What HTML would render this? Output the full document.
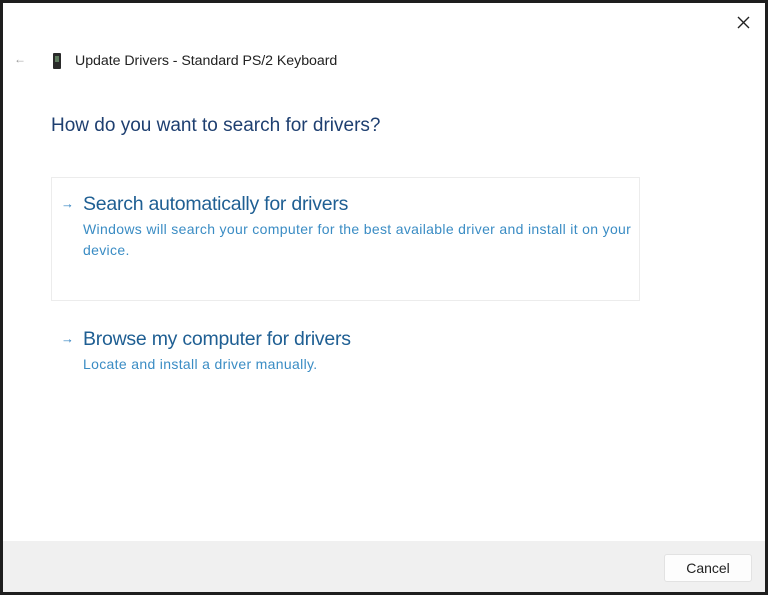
<!DOCTYPE html>
<html><head><style>
html,body{margin:0;padding:0;width:768px;height:595px;overflow:hidden;background:#fff;font-family:"Liberation Sans",sans-serif;}
.frame{position:absolute;left:0;top:0;width:762px;height:589px;border:3px solid #1e1e1e;background:#fff;}
.abs{position:absolute;white-space:nowrap;}
.footer{position:absolute;left:3px;top:541px;width:762px;height:51px;background:#f0f0f0;}
.btn{position:absolute;left:664px;top:554px;width:86px;height:26px;background:#fdfdfd;border:1px solid #e2e2e2;border-radius:3px;font-size:14px;color:#222;text-align:center;line-height:26px;}
.box{position:absolute;left:51px;top:177px;width:587px;height:122px;border:1px solid #ececec;}
.t{color:#1f5f93;font-size:19.5px;letter-spacing:-0.25px;}
.d{color:#3a8cc4;font-size:14px;letter-spacing:0.33px;}
.ar{color:#2f80c0;font-size:13px;}
</style></head><body>
<div class="frame"></div>
<svg class="abs" style="left:737px;top:16px" width="13" height="13" viewBox="0 0 13 13"><path d="M1 1L12 12M12 1L1 12" stroke="#222" stroke-width="1.4"/></svg>
<div class="abs" style="left:14px;top:52px;font-size:12px;color:#999;">←</div>
<div class="abs" style="left:53px;top:53px;width:8px;height:16px;background:#2a2a2a;border-radius:1px;"><div style="position:absolute;left:2px;top:3px;width:4px;height:6px;background:#5d7a5d;"></div></div>
<div class="abs" style="left:75px;top:53px;font-size:14.2px;color:#222;letter-spacing:-0.05px;">Update Drivers - Standard PS/2 Keyboard</div>
<div class="abs" style="left:51px;top:115px;font-size:19px;color:#1e3f70;letter-spacing:0px;">How do you want to search for drivers?</div>
<div class="box"></div>
<div class="abs ar" style="left:61px;top:196px;">→</div>
<div class="abs t" style="left:83px;top:193px;">Search automatically for drivers</div>
<div class="abs d" style="left:83px;top:221px;">Windows will search your computer for the best available driver and install it on your</div>
<div class="abs d" style="left:83px;top:242px;">device.</div>
<div class="abs ar" style="left:61px;top:331px;">→</div>
<div class="abs t" style="left:83px;top:328px;">Browse my computer for drivers</div>
<div class="abs d" style="left:83px;top:356px;">Locate and install a driver manually.</div>
<div class="footer"></div>
<div class="btn">Cancel</div>
</body></html>
